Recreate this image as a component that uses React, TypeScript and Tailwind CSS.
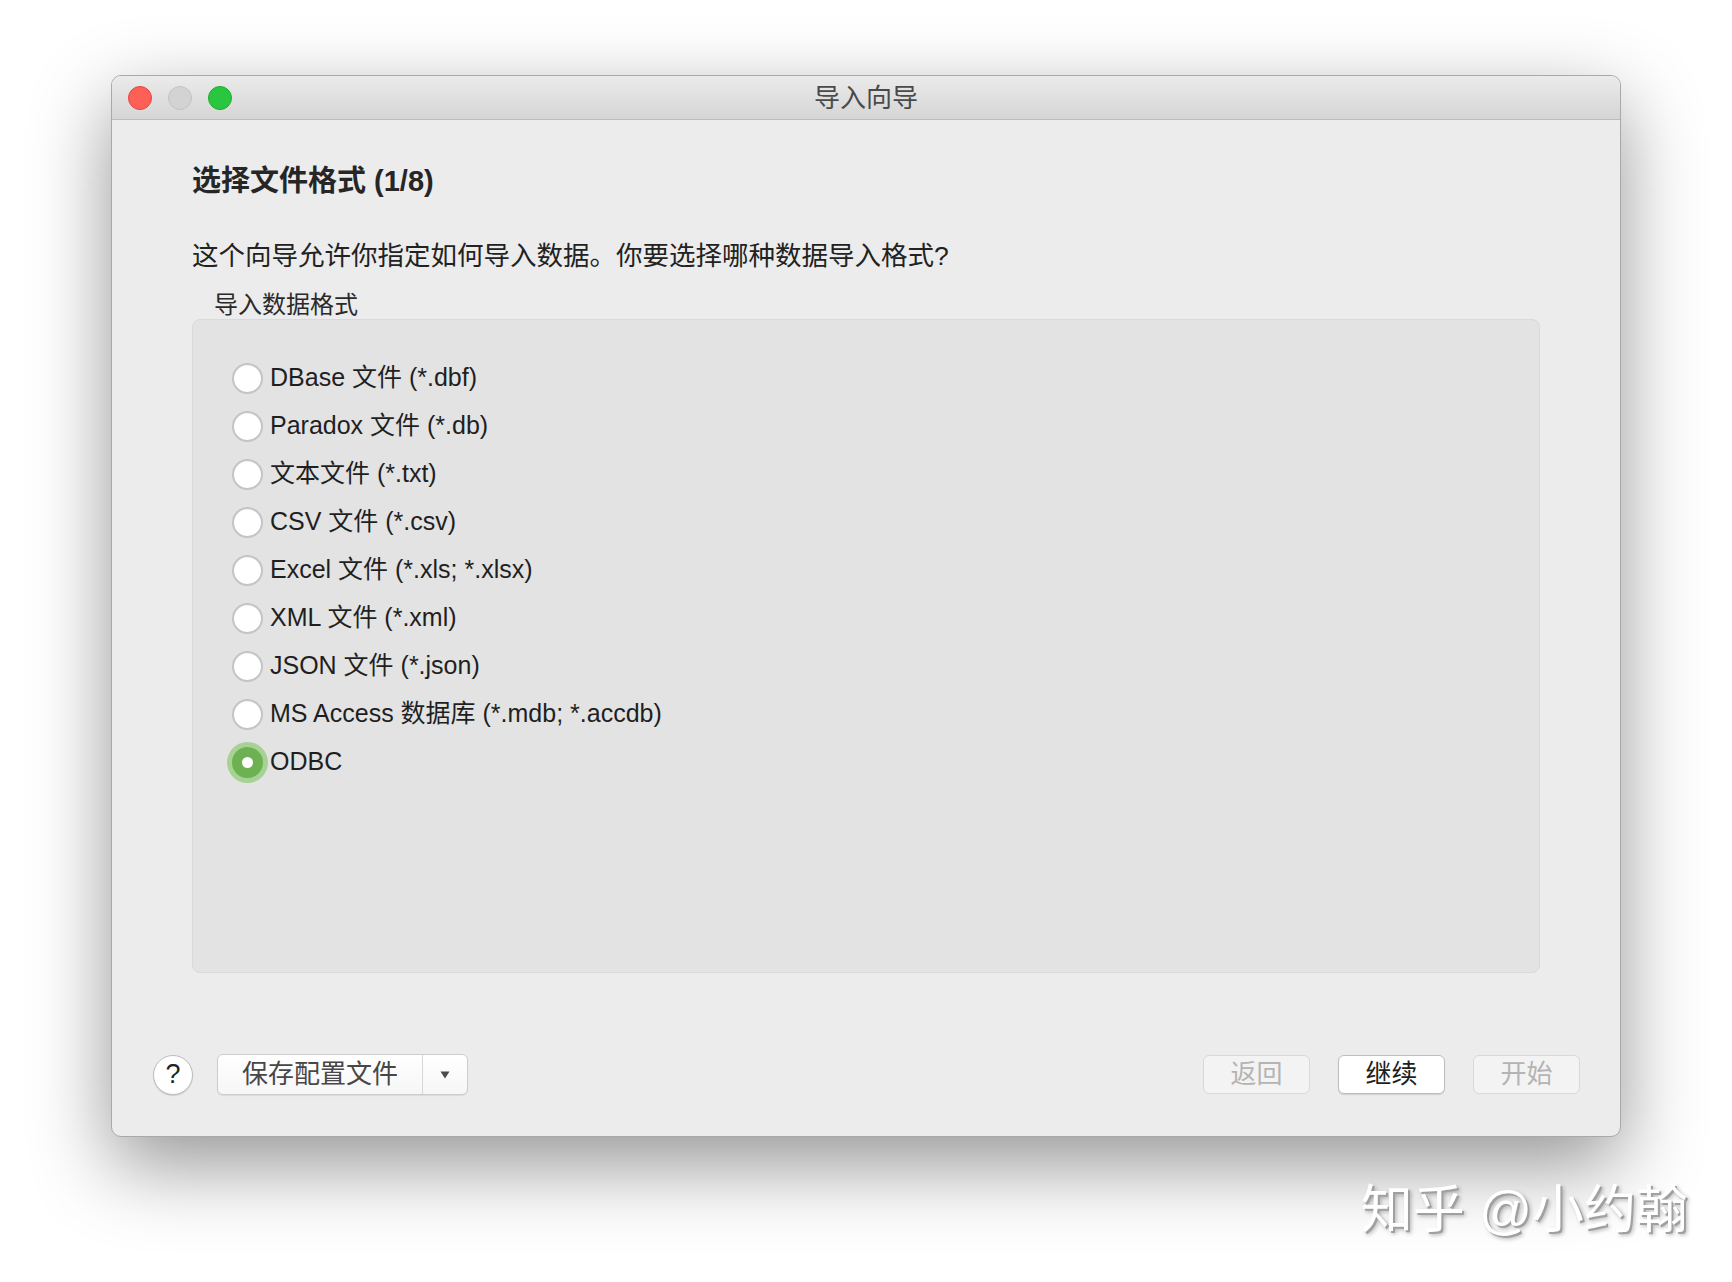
const font = { fontFamily: '"Liberation Sans", "Noto Sans CJK SC", sans-serif' };

const formats = [
  "DBase 文件 (*.dbf)",
  "Paradox 文件 (*.db)",
  "文本文件 (*.txt)",
  "CSV 文件 (*.csv)",
  "Excel 文件 (*.xls; *.xlsx)",
  "XML 文件 (*.xml)",
  "JSON 文件 (*.json)",
  "MS Access 数据库 (*.mdb; *.accdb)",
  "ODBC",
];

function Radio({ checked }: { checked: boolean }) {
  if (checked) {
    return (
      <span className="relative flex h-[31px] w-[31px] shrink-0 items-center justify-center">
        <span className="absolute -inset-[5px] rounded-full bg-[#a6d293]" />
        <span className="relative flex h-[31px] w-[31px] items-center justify-center rounded-full bg-[#6db152]">
          <span className="h-[11px] w-[11px] rounded-full bg-white" />
        </span>
      </span>
    );
  }
  return (
    <span className="h-[31px] w-[31px] shrink-0 rounded-full border-2 border-[#c4c4c4] bg-white shadow-[inset_0_1px_1px_rgba(0,0,0,0.04)]" />
  );
}

function Btn({ label, disabled }: { label: string; disabled?: boolean }) {
  return (
    <button
      className={
        disabled
          ? "flex h-[39px] w-[107px] items-center justify-center rounded-[6px] border border-[#d8d8d8] bg-[#f3f3f3] text-[26px] text-[#b4b4b4]"
          : "flex h-[39px] w-[107px] items-center justify-center rounded-[6px] border border-[#bdbdbd] bg-white text-[26px] text-[#1e1e1e] shadow-[0_1px_1px_rgba(0,0,0,0.12)]"
      }
    >
      {label}
    </button>
  );
}

export default function App() {
  return (
    <div className="min-h-[1282px] w-[1732px] bg-white" style={font}>
      <div className="pl-[111px] pt-[75px]">
        <div className="flex h-[1062px] w-[1510px] flex-col overflow-hidden rounded-[10px] border border-[#a9a9a9] bg-[#ececec] shadow-[0_28px_80px_rgba(0,0,0,0.42)]">
          <div className="grid h-[44px] shrink-0 grid-cols-[1fr_auto_1fr] items-center border-b border-[#bcbcbc] bg-gradient-to-b from-[#ebebeb] to-[#d5d5d5]">
            <div className="flex items-center gap-[16px] pl-[16px]">
              <span className="h-[24px] w-[24px] rounded-full border border-[#e2463f] bg-[#fe5f57]" />
              <span className="h-[24px] w-[24px] rounded-full border border-[#c3c3c3] bg-[#d3d3d3]" />
              <span className="h-[24px] w-[24px] rounded-full border border-[#1eac2c] bg-[#29c740]" />
            </div>
            <div className="text-[26px] leading-[44px] text-[#4a4a4a]">导入向导</div>
            <div />
          </div>

          <div className="flex flex-1 flex-col">
            <div className="px-[80px] pt-[44px]">
              <h1 className="text-[29px] font-bold leading-[34px] text-[#262626]">选择文件格式 (1/8)</h1>
              <p className="mt-[41px] text-[26.5px] leading-[34px] text-[#222]">
                这个向导允许你指定如何导入数据。你要选择哪种数据导入格式?
              </p>
              <div className="mt-[17px] pl-[22px] text-[24px] leading-[29px] text-[#2a2a2a]">导入数据格式</div>
              <div className="h-[654px] rounded-[8px] border border-[#d9d9d9] bg-[#e3e3e3] pl-[39px] pt-[34px]">
                {formats.map((f, i) => (
                  <div key={f} className="flex h-[48px] items-center gap-[7px]">
                    <Radio checked={i === formats.length - 1} />
                    <span className="text-[25px] text-[#1f1f1f]">{f}</span>
                  </div>
                ))}
              </div>
            </div>

            <div className="mt-auto flex items-center justify-between pl-[41px] pr-[40px] pb-[41px]">
              <div className="flex items-center gap-[24px]">
                <button className="flex h-[40px] w-[40px] items-center justify-center rounded-full border border-[#bdbdbd] bg-white text-[27px] text-[#222] shadow-[0_1px_1px_rgba(0,0,0,0.12)]">
                  ?
                </button>
                <div className="flex h-[41px] w-[251px] overflow-hidden rounded-[6px] border border-[#cdcdcd] bg-gradient-to-b from-white to-[#f6f6f6] shadow-[0_1px_1px_rgba(0,0,0,0.08)]">
                  <span className="flex w-[205px] items-center justify-center border-r border-[#d6d6d6] text-[26px] text-[#474747]">
                    保存配置文件
                  </span>
                  <span className="flex flex-1 items-center justify-center">
                    <svg width="10" height="8" viewBox="0 0 10 8">
                      <path d="M0.5 0.5 H9.5 L5 7.5 Z" fill="#4a4a4a" />
                    </svg>
                  </span>
                </div>
              </div>
              <div className="flex items-center gap-[28px]">
                <Btn label="返回" disabled />
                <Btn label="继续" />
                <Btn label="开始" disabled />
              </div>
            </div>
          </div>
        </div>
      </div>

      <div className="flex justify-end pr-[44px] pt-[43px]">
        <span className="text-[52px] leading-[60px] text-white [text-shadow:2px_2px_0_#a0a0a0,3px_3px_4px_rgba(0,0,0,0.3)]">
          知乎 @小约翰
        </span>
      </div>
    </div>
  );
}
